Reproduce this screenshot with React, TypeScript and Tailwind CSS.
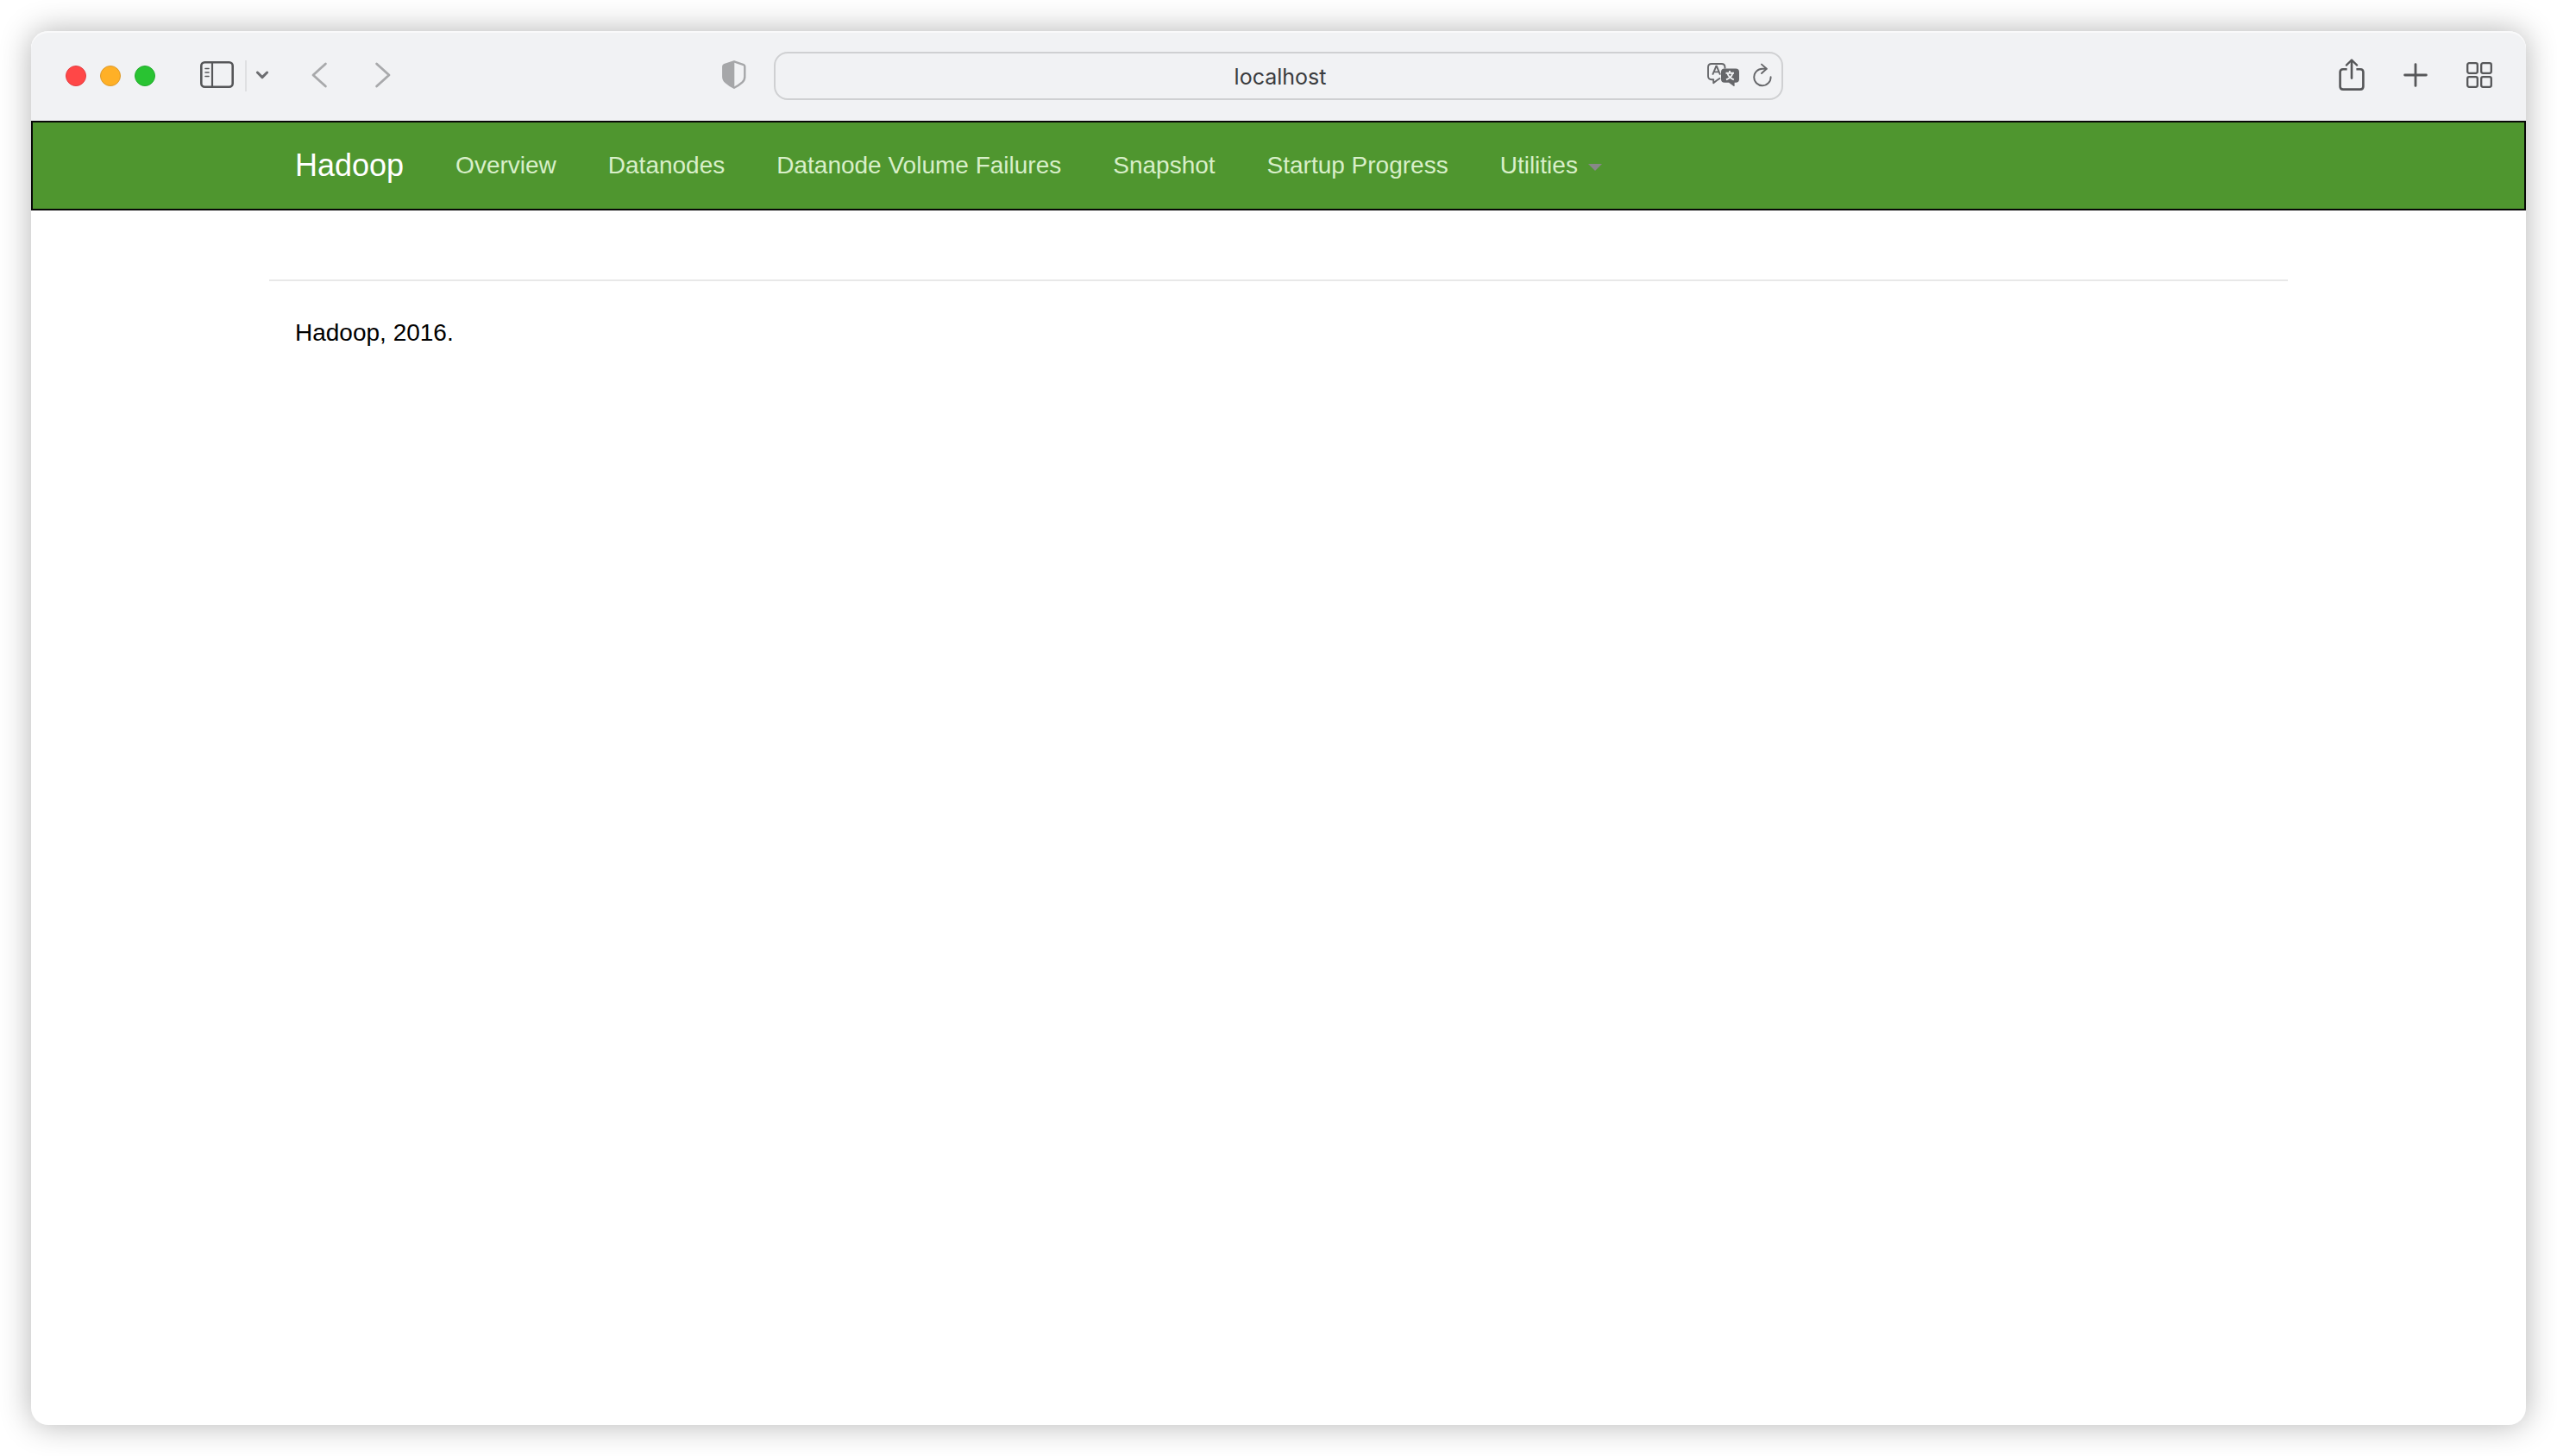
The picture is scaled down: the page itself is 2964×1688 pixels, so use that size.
import React, { ReactNode } from 'react';

interface ToolButtonProps {
  label: string;
  className?: string;
  children: ReactNode;
}

const navItems = [
  { name: 'Overview', href: '#tab-overview' },
  { name: 'Datanodes', href: '#tab-datanode' },
  { name: 'Datanode Volume Failures', href: '#tab-datanode-volume-failures' },
  { name: 'Snapshot', href: '#tab-snapshot' },
  { name: 'Startup Progress', href: '#tab-startup-progress' },
];

const ToolButton: React.FC<ToolButtonProps> = ({ label, className = '', children }) => (
  <button type="button" aria-label={label} className={`shrink-0 pb-0.5 ${className}`}>
    {children}
  </button>
);

const WindowControls = () => (
  <div className="flex gap-4">
    <button type="button" aria-label="Close" className="size-6 rounded-full border border-[#e33e41] bg-[#ff4747]" />
    <button type="button" aria-label="Minimize" className="size-6 rounded-full border border-[#dd9a2b] bg-[#ffb026]" />
    <button type="button" aria-label="Zoom" className="size-6 rounded-full border border-[#23ac2d] bg-[#29c332]" />
  </div>
);

const SidebarIcon = () => (
  <svg width="40" height="32" viewBox="0 0 40 32" fill="none" stroke="#565759" strokeLinecap="round">
    <rect x="1.3" y="1.3" width="36.4" height="28.4" rx="4" strokeWidth="2.6" />
    <path d="M14 2V29" strokeWidth="2.2" />
    <path d="M6 8.5h4M6 13h4M6 17.5h4" strokeWidth="1.6" />
  </svg>
);

const ShieldIcon = () => (
  <svg width="28" height="34" viewBox="0 0 28 34" fill="none">
    <path
      d="M14 1.3L25 5.2Q26.3 5.7 26.3 7V19Q26.3 23 23.5 25.4Q20 28.6 14 31.8Q8 28.6 4.5 25.4Q1.3 22.6 1.3 19V7Q1.3 5.7 2.6 5.2Z"
      stroke="#a6a7a9"
      strokeWidth="2.4"
      strokeLinejoin="round"
    />
    <path d="M14.3 1.3L2.6 5.2Q1.3 5.7 1.3 7V19Q1.3 22.6 4.5 25.4Q8 28.6 14.3 31.8Z" fill="#a6a7a9" />
  </svg>
);

const TranslateIcon = () => (
  <svg width="38" height="28" viewBox="0 0 38 28" fill="none">
    <path
      d="M15 17.5L11 20.2L7.2 23.2V19.2H5Q1 19.2 1 15.2V5Q1 1 5 1H16.5Q20.5 1 20.5 5V6.5"
      stroke="#66676a"
      strokeWidth="1.9"
      strokeLinejoin="round"
    />
    <path d="M6.2 13.6L10.3 3.8H10.9L15 13.6M7.6 10.4H13.6" stroke="#66676a" strokeWidth="1.9" />
    <path
      d="M20 6.5H33Q37 6.5 37 10.5V18.8Q37 22.8 33 22.8H31.6V26.4Q31.4 27.4 30.4 26.8L25 22.8H20Q16 22.8 16 18.8V10.5Q16 6.5 20 6.5Z"
      fill="#66676a"
    />
    <path
      d="M26 9V11.5M21.5 11.8H31M29.4 12Q28 17 22 19.4M23.4 12Q25 17 30.8 19.4"
      stroke="#f1f2f4"
      strokeWidth="1.9"
    />
  </svg>
);

const ReloadIcon = () => (
  <svg width="24" height="28" viewBox="0 0 24 28" fill="none" stroke="#66676a" strokeWidth="1.9" strokeLinecap="round" strokeLinejoin="round">
    <path d="M21.6 16.2A9.7 9.7 0 1 1 11.9 6.8H16.6" />
    <path d="M11 1.6L16.8 6.8L11 12" />
  </svg>
);

const ShareIcon = () => (
  <svg width="30" height="38" viewBox="0 0 30 38" fill="none" stroke="#565759" strokeWidth="2.6" strokeLinecap="round" strokeLinejoin="round">
    <path d="M9.6 12.2H5Q1.6 12.2 1.6 15.6V32.2Q1.6 35.6 5 35.6H25Q28.4 35.6 28.4 32.2V15.6Q28.4 12.2 25 12.2H20.4" strokeLinecap="butt" />
    <path d="M15 2V22.6" />
    <path d="M8.8 7.6L15 1.6L21.2 7.6" strokeWidth="2.2" />
  </svg>
);

const GridIcon = () => (
  <svg width="30" height="30" viewBox="0 0 30 30" fill="none" stroke="#565759" strokeWidth="2.3">
    <rect x="1.2" y="1.2" width="11.6" height="11.6" rx="2" />
    <rect x="17.2" y="1.2" width="11.6" height="11.6" rx="2" />
    <rect x="1.2" y="17.2" width="11.6" height="11.6" rx="2" />
    <rect x="17.2" y="17.2" width="11.6" height="11.6" rx="2" />
  </svg>
);

const Toolbar = () => (
  <header className="grid h-[104px] grid-cols-[1fr_minmax(0,1170px)_1fr] items-center rounded-t-[20px] bg-[#f1f2f4] shadow-[inset_0_2px_0_#f9f9fa]">
    <div className="flex items-center pr-8 pl-10">
      <WindowControls />
      <ToolButton label="Show sidebar" className="ml-13">
        <SidebarIcon />
      </ToolButton>
      <div className="ml-3 h-9 w-0.5 bg-[#dfe0e2]" />
      <ToolButton label="Tab groups" className="ml-2.5">
        <svg width="16" height="12" viewBox="0 0 16 12" fill="none" stroke="#6c6d70" strokeWidth="3" strokeLinecap="round" strokeLinejoin="round">
          <path d="M2.4 3L8 8.6L13.6 3" />
        </svg>
      </ToolButton>
      <ToolButton label="Back" className="ml-12">
        <svg width="20" height="30" viewBox="0 0 20 30" fill="none" stroke="#a8a9ab" strokeWidth="2.8" strokeLinecap="round" strokeLinejoin="round">
          <path d="M17.4 2L3 15L17.4 28" />
        </svg>
      </ToolButton>
      <ToolButton label="Forward" className="ml-[54px]">
        <svg width="20" height="30" viewBox="0 0 20 30" fill="none" stroke="#a8a9ab" strokeWidth="2.8" strokeLinecap="round" strokeLinejoin="round">
          <path d="M2.6 2L17 15L2.6 28" />
        </svg>
      </ToolButton>
      <ToolButton label="Privacy report" className="ml-auto">
        <ShieldIcon />
      </ToolButton>
    </div>
    <div className="relative">
      <input
        type="text"
        aria-label="Address"
        defaultValue="localhost"
        className="block h-14 w-full rounded-2xl border-2 border-[#cfd0d2] bg-transparent pt-0.5 pl-1 text-center font-['Inter',sans-serif] text-[25px] text-[#3b3c3e] outline-none"
      />
      <div className="absolute inset-y-0 right-3 flex items-center gap-3.5">
        <ToolButton label="Translate">
          <TranslateIcon />
        </ToolButton>
        <ToolButton label="Reload">
          <ReloadIcon />
        </ToolButton>
      </div>
    </div>
    <div className="flex items-center justify-end gap-[45px] pr-[39px]">
      <ToolButton label="Share">
        <ShareIcon />
      </ToolButton>
      <ToolButton label="New tab">
        <svg width="28" height="28" viewBox="0 0 28 28" fill="none" stroke="#565759" strokeWidth="2.8" strokeLinecap="round">
          <path d="M14 1.6V26.4M1.6 14H26.4" />
        </svg>
      </ToolButton>
      <ToolButton label="Tab overview">
        <GridIcon />
      </ToolButton>
    </div>
  </header>
);

const Navbar = () => (
  <nav className="mb-10 border-2 border-[#080808] bg-[#4f962f]">
    <div className="mx-auto flex max-w-[2340px] text-[28px] leading-10 text-[#d8efc9]">
      <a href="#" className="p-[30px] text-4xl leading-10 text-white">
        Hadoop
      </a>
      <ul className="flex">
        {navItems.map((item) => (
          <li key={item.name}>
            <a href={item.href} className="block p-[30px]">
              {item.name}
            </a>
          </li>
        ))}
        <li>
          <button type="button" className="flex items-center gap-3 p-[30px]">
            Utilities
            <span className="mt-1 border-x-8 border-t-8 border-x-transparent border-t-[#888888]" />
          </button>
        </li>
      </ul>
    </div>
  </nav>
);

const App: React.FC = () => {
  return (
    <div className="flex min-h-screen flex-col bg-white p-9 font-['Liberation_Sans',Arial,sans-serif]">
      <div className="flex grow flex-col rounded-[20px] bg-white shadow-[0_0_36px_rgba(0,0,0,0.3)]">
        <Toolbar />
        <Navbar />
        <main className="mx-auto w-full max-w-[2340px]">
          <hr className="my-10 border-t-2 border-[#e8e8e8]" />
          <footer className="px-[30px] text-[28px] leading-10 text-black">
            <p>Hadoop, 2016.</p>
          </footer>
        </main>
      </div>
    </div>
  );
};

export default App;
